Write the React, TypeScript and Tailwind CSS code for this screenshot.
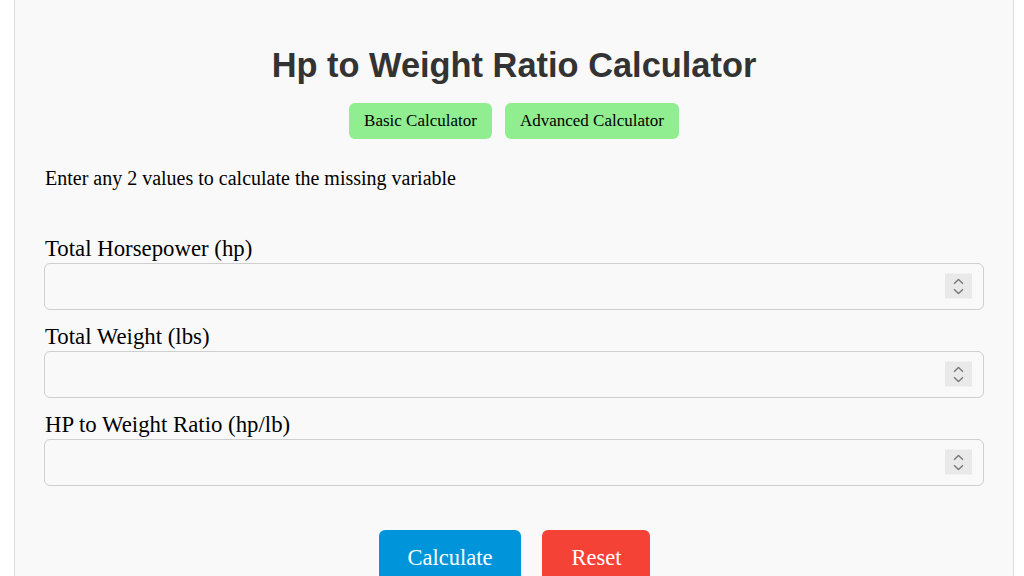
import { useState } from 'react'

const fields = [
  { id: 'hp', label: 'Total Horsepower (hp)' },
  { id: 'weight', label: 'Total Weight (lbs)' },
  { id: 'ratio', label: 'HP to Weight Ratio (hp/lb)' },
]

function Spinner() {
  return (
    <div className="pointer-events-none absolute right-[12px] top-1/2 flex h-[25px] w-[27px] -translate-y-1/2 flex-col items-center justify-center gap-[4px] bg-[#e9e9e9]">
      <svg width="11" height="6" viewBox="0 0 11 6" fill="none">
        <path d="M1 5.2 L5.5 1 L10 5.2" stroke="#787878" strokeWidth="1.4" />
      </svg>
      <svg width="11" height="6" viewBox="0 0 11 6" fill="none">
        <path d="M1 0.8 L5.5 5 L10 0.8" stroke="#787878" strokeWidth="1.4" />
      </svg>
    </div>
  )
}

export default function App() {
  const [values, setValues] = useState<Record<string, string>>({ hp: '', weight: '', ratio: '' })

  return (
    <div className="min-h-[576px] bg-white font-['Liberation_Serif',serif]">
      <div className="ml-[14px] w-[1000px] border-x border-b border-[#dcdcdc] bg-[#f9f9f9] px-[29px] pt-[45px] pb-[30px]">
        <h1 className="text-center font-['Liberation_Sans',Arial,sans-serif] text-[34.4px] font-bold leading-[40px] text-[#333]">
          Hp to Weight Ratio Calculator
        </h1>

        <div className="mt-[18px] flex justify-center gap-[13px]">
          <button className="flex h-[35.5px] items-center rounded-[6px] bg-[#90ee90] px-[15px] text-[17px] text-black">
            Basic Calculator
          </button>
          <button className="flex h-[35.5px] items-center rounded-[6px] bg-[#90ee90] px-[15px] text-[17px] text-black">
            Advanced Calculator
          </button>
        </div>

        <p className="mt-[27px] pl-[1px] text-[20px] leading-[24px] text-black">
          Enter any 2 values to calculate the missing variable
        </p>

        <div className="mt-[45px] flex flex-col gap-[13px]">
          {fields.map((f) => (
            <div key={f.id} className="flex flex-col gap-[1px]">
              <label htmlFor={f.id} className="pl-[1px] text-[22.8px] leading-[27px] text-black">
                {f.label}
              </label>
              <div className="relative">
                <input
                  id={f.id}
                  type="number"
                  value={values[f.id]}
                  onChange={(e) => setValues({ ...values, [f.id]: e.target.value })}
                  className="block h-[47px] w-full rounded-[6px] border border-[#cfcfcf] bg-transparent px-3 text-[20px] outline-none [appearance:textfield] [&::-webkit-inner-spin-button]:appearance-none [&::-webkit-outer-spin-button]:appearance-none"
                />
                <Spinner />
              </div>
            </div>
          ))}
        </div>

        <div className="mt-[44px] flex justify-center gap-[21px]">
          <button className="ml-[1px] h-[56px] rounded-[6px] bg-[#0095da] px-[29px] text-[22.5px] text-white">
            Calculate
          </button>
          <button className="h-[56px] rounded-[6px] bg-[#f44336] px-[29px] text-[22.5px] text-white">
            Reset
          </button>
        </div>
      </div>
    </div>
  )
}
